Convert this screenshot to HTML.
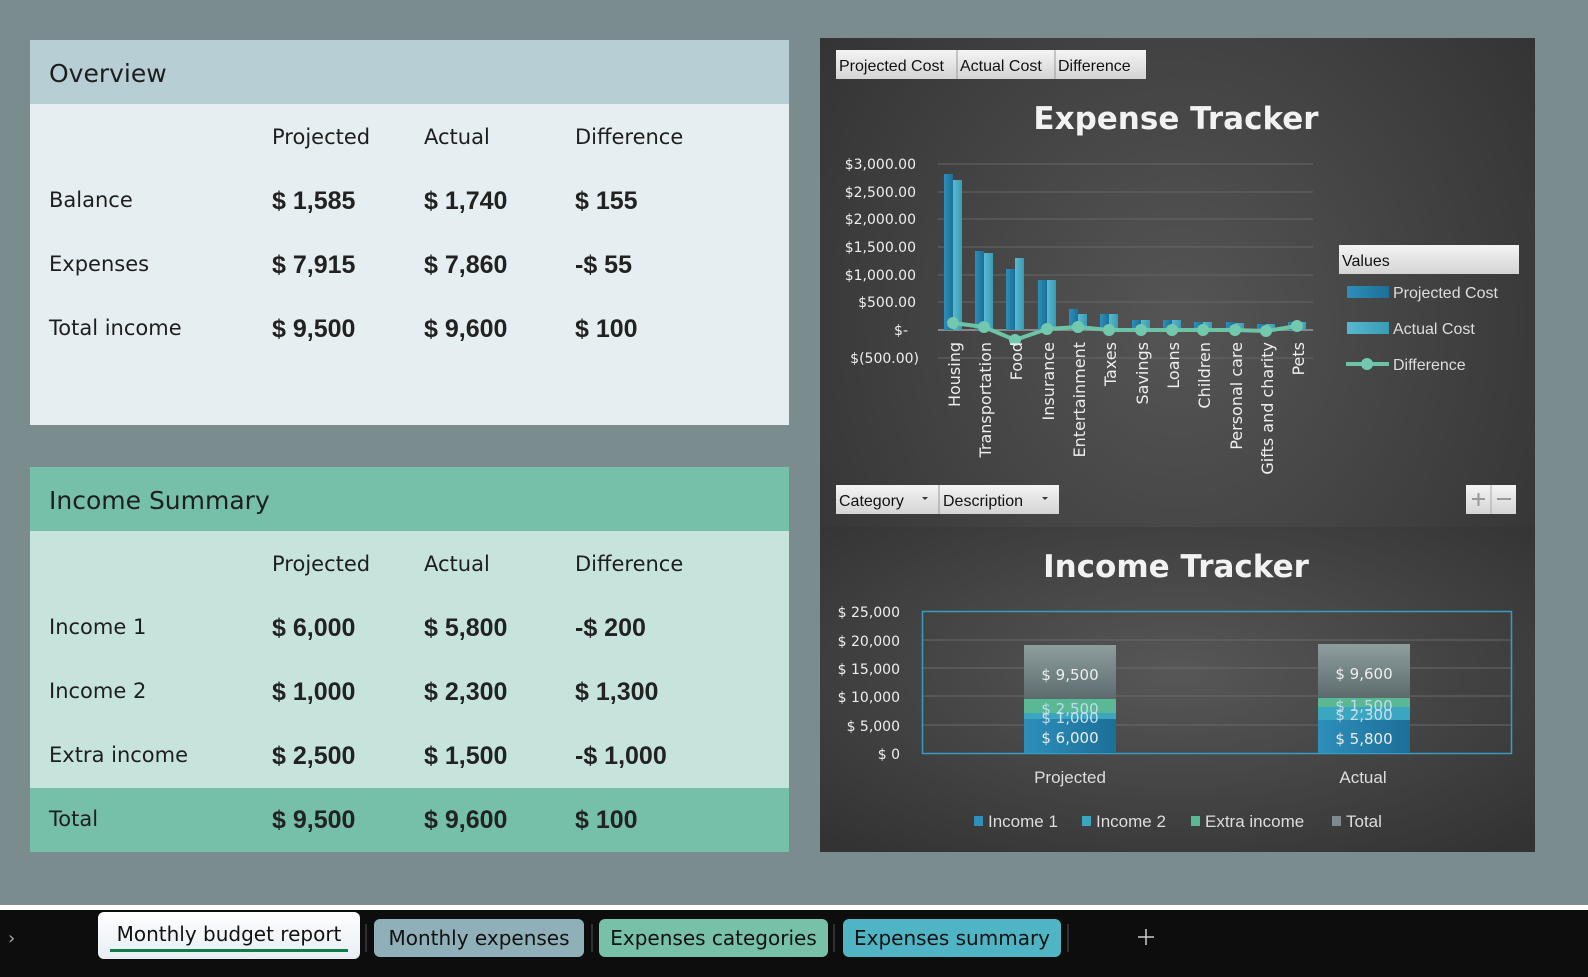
<!DOCTYPE html>
<html><head><meta charset="utf-8"><style>
*{margin:0;padding:0;box-sizing:border-box}
body{width:1588px;height:977px;background:#7b8c8e;position:relative;overflow:hidden;font-family:"Liberation Sans","DejaVu Sans",sans-serif;color:#1e1e1e}
.abs{position:absolute}
.t{position:absolute;font-size:22px;line-height:1;white-space:nowrap;font-family:"DejaVu Sans","Liberation Sans",sans-serif;font-size:21px}
.v{position:absolute;font-size:25px;font-weight:bold;line-height:1;white-space:nowrap;color:#222}
.tab{position:absolute;top:919px;height:38px;border-radius:6px;font-size:21px;line-height:38px;text-align:center;color:#111;font-family:"DejaVu Sans","Liberation Sans",sans-serif;font-size:20px}
</style></head><body>
<!-- Overview -->
<div class="abs" style="left:30px;top:40px;width:759px;height:64px;background:#b6ced4"></div>
<div class="abs" style="left:30px;top:104px;width:759px;height:321px;background:#e5eef0"></div>
<div class="t" style="left:49px;top:61px;font-size:25px">Overview</div>
<div class="t" style="left:272px;top:127px">Projected</div>
<div class="t" style="left:424px;top:127px">Actual</div>
<div class="t" style="left:575px;top:127px">Difference</div>
<div class="t" style="left:49px;top:190px">Balance</div>
<div class="t" style="left:49px;top:254px">Expenses</div>
<div class="t" style="left:49px;top:318px">Total income</div>
<div class="v" style="left:272px;top:189px">$ 1,585</div><div class="v" style="left:424px;top:189px">$ 1,740</div><div class="v" style="left:575px;top:189px">$ 155</div>
<div class="v" style="left:272px;top:253px">$ 7,915</div><div class="v" style="left:424px;top:253px">$ 7,860</div><div class="v" style="left:575px;top:253px">-$ 55</div>
<div class="v" style="left:272px;top:317px">$ 9,500</div><div class="v" style="left:424px;top:317px">$ 9,600</div><div class="v" style="left:575px;top:317px">$ 100</div>
<!-- Income summary -->
<div class="abs" style="left:30px;top:467px;width:759px;height:64px;background:#76bfa8"></div>
<div class="abs" style="left:30px;top:531px;width:759px;height:257px;background:#c7e4dc"></div>
<div class="abs" style="left:30px;top:788px;width:759px;height:64px;background:#76bfa8"></div>
<div class="t" style="left:49px;top:488px;font-size:25px">Income Summary</div>
<div class="t" style="left:272px;top:554px">Projected</div>
<div class="t" style="left:424px;top:554px">Actual</div>
<div class="t" style="left:575px;top:554px">Difference</div>
<div class="t" style="left:49px;top:617px">Income 1</div>
<div class="t" style="left:49px;top:681px">Income 2</div>
<div class="t" style="left:49px;top:745px">Extra income</div>
<div class="t" style="left:49px;top:809px">Total</div>
<div class="v" style="left:272px;top:616px">$ 6,000</div><div class="v" style="left:424px;top:616px">$ 5,800</div><div class="v" style="left:575px;top:616px">-$ 200</div>
<div class="v" style="left:272px;top:680px">$ 1,000</div><div class="v" style="left:424px;top:680px">$ 2,300</div><div class="v" style="left:575px;top:680px">$ 1,300</div>
<div class="v" style="left:272px;top:744px">$ 2,500</div><div class="v" style="left:424px;top:744px">$ 1,500</div><div class="v" style="left:575px;top:744px">-$ 1,000</div>
<div class="v" style="left:272px;top:808px">$ 9,500</div><div class="v" style="left:424px;top:808px">$ 9,600</div><div class="v" style="left:575px;top:808px">$ 100</div>

<!-- Charts panel -->
<svg class="abs" style="left:0;top:0" width="1588" height="977" font-family="DejaVu Sans, Liberation Sans, sans-serif">
<defs>
<radialGradient id="bg" cx="0.5" cy="0.35" r="0.7"><stop offset="0" stop-color="#555"/><stop offset="1" stop-color="#2f2f2f"/></radialGradient>
<radialGradient id="bg2" cx="0.5" cy="0.45" r="0.7"><stop offset="0" stop-color="#575757"/><stop offset="1" stop-color="#333"/></radialGradient>
<linearGradient id="btn" x1="0" y1="0" x2="0" y2="1"><stop offset="0" stop-color="#f4f4f4"/><stop offset="1" stop-color="#d4d4d4"/></linearGradient>
<linearGradient id="pc" x1="0" x2="1"><stop offset="0" stop-color="#2d8fba"/><stop offset="1" stop-color="#1c6f98"/></linearGradient>
<linearGradient id="ac" x1="0" x2="1"><stop offset="0" stop-color="#58b9cf"/><stop offset="1" stop-color="#3a9bb5"/></linearGradient>
<linearGradient id="tot" x1="0" y1="0" x2="0" y2="1"><stop offset="0" stop-color="#8e9d9e"/><stop offset="1" stop-color="#5c6b6d"/></linearGradient>
</defs>
<rect x="820" y="38" width="715" height="814" fill="url(#bg)"/>
<rect x="820" y="527" width="715" height="325" fill="url(#bg2)"/>
<!-- buttons -->
<rect x="836" y="50" width="310" height="29" fill="url(#btn)"/>
<line x1="957" y1="50" x2="957" y2="79" stroke="#999"/><line x1="1055" y1="50" x2="1055" y2="79" stroke="#999"/>
<g font-size="16" fill="#111" font-family="Liberation Sans, sans-serif"><text x="839" y="71">Projected Cost</text><text x="960" y="71">Actual Cost</text><text x="1058" y="71">Difference</text></g>
<text x="1176" y="129" text-anchor="middle" font-size="31" font-weight="bold" fill="#f2f2f2">Expense Tracker</text>
<!-- grid -->
<g stroke="#666" stroke-width="1">
<line x1="938" y1="164" x2="1313" y2="164"/><line x1="938" y1="192" x2="1313" y2="192"/><line x1="938" y1="219" x2="1313" y2="219"/><line x1="938" y1="247" x2="1313" y2="247"/><line x1="938" y1="275" x2="1313" y2="275"/><line x1="938" y1="302" x2="1313" y2="302"/><line x1="938" y1="358" x2="1313" y2="358"/>
</g>
<line x1="938" y1="330" x2="1313" y2="330" stroke="#888" stroke-width="2"/>
<g font-size="14" fill="#eee" text-anchor="end">
<text x="916" y="169">$3,000.00</text><text x="916" y="197">$2,500.00</text><text x="916" y="224">$2,000.00</text><text x="916" y="252">$1,500.00</text><text x="916" y="280">$1,000.00</text><text x="916" y="307">$500.00</text><text x="908" y="335">$-</text><text x="919" y="363">$(500.00)</text>
</g>
<g>
<rect x="944" y="174" width="9" height="156" fill="url(#pc)"/><rect x="953" y="180" width="9" height="150" fill="url(#ac)"/>
<rect x="975" y="251" width="9" height="79" fill="url(#pc)"/><rect x="984" y="253" width="9" height="77" fill="url(#ac)"/>
<rect x="1006" y="269" width="9" height="61" fill="url(#pc)"/><rect x="1015" y="258" width="9" height="72" fill="url(#ac)"/>
<rect x="1038" y="280" width="9" height="50" fill="url(#pc)"/><rect x="1047" y="280" width="9" height="50" fill="url(#ac)"/>
<rect x="1069" y="309" width="9" height="21" fill="url(#pc)"/><rect x="1078" y="314" width="9" height="16" fill="url(#ac)"/>
<rect x="1100" y="314" width="9" height="16" fill="url(#pc)"/><rect x="1109" y="314" width="9" height="16" fill="url(#ac)"/>
<rect x="1132" y="320" width="9" height="10" fill="url(#pc)"/><rect x="1141" y="320" width="9" height="10" fill="url(#ac)"/>
<rect x="1163" y="320" width="9" height="10" fill="url(#pc)"/><rect x="1172" y="320" width="9" height="10" fill="url(#ac)"/>
<rect x="1194" y="322" width="9" height="8" fill="url(#pc)"/><rect x="1203" y="322" width="9" height="8" fill="url(#ac)"/>
<rect x="1226" y="322" width="9" height="8" fill="url(#pc)"/><rect x="1235" y="323" width="9" height="7" fill="url(#ac)"/>
<rect x="1257" y="324" width="9" height="6" fill="url(#pc)"/><rect x="1266" y="324" width="9" height="6" fill="url(#ac)"/>
<rect x="1288" y="322" width="9" height="8" fill="url(#pc)"/><rect x="1297" y="322" width="9" height="8" fill="url(#ac)"/>
</g>
<polyline points="953,323 984,327 1015,340 1047,329 1078,327 1109,330 1141,330 1172,330 1203,330 1235,330 1266,331 1297,326" fill="none" stroke="#6cc3a6" stroke-width="4"/>
<g fill="#72c9ad"><circle cx="953" cy="323" r="6"/><circle cx="984" cy="327" r="6"/><circle cx="1015" cy="340" r="6"/><circle cx="1047" cy="329" r="6"/><circle cx="1078" cy="327" r="6"/><circle cx="1109" cy="330" r="6"/><circle cx="1141" cy="330" r="6"/><circle cx="1172" cy="330" r="6"/><circle cx="1203" cy="330" r="6"/><circle cx="1235" cy="330" r="6"/><circle cx="1266" cy="331" r="6"/><circle cx="1297" cy="326" r="6"/></g>
<g font-size="16" fill="#eee" text-anchor="end">
<text transform="translate(960,342) rotate(-90)">Housing</text>
<text transform="translate(991,342) rotate(-90)">Transportation</text>
<text transform="translate(1022,342) rotate(-90)">Food</text>
<text transform="translate(1054,342) rotate(-90)">Insurance</text>
<text transform="translate(1085,342) rotate(-90)">Entertainment</text>
<text transform="translate(1116,342) rotate(-90)">Taxes</text>
<text transform="translate(1148,342) rotate(-90)">Savings</text>
<text transform="translate(1179,342) rotate(-90)">Loans</text>
<text transform="translate(1210,342) rotate(-90)">Children</text>
<text transform="translate(1242,342) rotate(-90)">Personal care</text>
<text transform="translate(1273,342) rotate(-90)">Gifts and charity</text>
<text transform="translate(1304,342) rotate(-90)">Pets</text>
</g>
<!-- legend -->
<rect x="1339" y="245" width="180" height="29" fill="url(#btn)"/>
<text x="1342" y="266" font-size="16" fill="#111" font-family="Liberation Sans, sans-serif">Values</text>
<rect x="1347" y="286" width="42" height="12" fill="url(#pc)"/>
<rect x="1347" y="322" width="42" height="12" fill="url(#ac)"/>
<line x1="1346" y1="364" x2="1389" y2="364" stroke="#6cc3a6" stroke-width="4"/><circle cx="1367" cy="364" r="6" fill="#72c9ad"/>
<g font-size="16" fill="#ddd" font-family="Liberation Sans, sans-serif"><text x="1393" y="298">Projected Cost</text><text x="1393" y="334">Actual Cost</text><text x="1393" y="370">Difference</text></g>
<!-- slicer buttons -->
<rect x="836" y="485" width="223" height="29" fill="url(#btn)"/><line x1="939" y1="485" x2="939" y2="514" stroke="#999"/>
<g font-size="16" fill="#111" font-family="Liberation Sans, sans-serif"><text x="839" y="506">Category</text><text x="943" y="506">Description</text></g>
<g fill="#333"><path d="M922 497h6l-3 3z"/><path d="M1042 497h6l-3 3z"/></g>
<rect x="1466" y="485" width="50" height="29" fill="url(#btn)"/><line x1="1491" y1="485" x2="1491" y2="514" stroke="#aaa"/>
<g stroke="#999" stroke-width="2"><line x1="1472" y1="499" x2="1485" y2="499"/><line x1="1478.5" y1="493" x2="1478.5" y2="506"/><line x1="1497" y1="499" x2="1511" y2="499"/></g>
<!-- income tracker -->
<text x="1176" y="577" text-anchor="middle" font-size="31" font-weight="bold" fill="#f2f2f2">Income Tracker</text>
<g stroke="#6a6a6a"><line x1="922" y1="640" x2="1511" y2="640"/><line x1="922" y1="668" x2="1511" y2="668"/><line x1="922" y1="696" x2="1511" y2="696"/><line x1="922" y1="725" x2="1511" y2="725"/></g>
<rect x="922.5" y="611.5" width="589" height="142" fill="none" stroke="#3a9bc0" stroke-width="1.5"/>
<g font-size="14" fill="#eee" text-anchor="end"><text x="900" y="617">$ 25,000</text><text x="900" y="646">$ 20,000</text><text x="900" y="674">$ 15,000</text><text x="900" y="702">$ 10,000</text><text x="900" y="731">$ 5,000</text><text x="900" y="759">$ 0</text></g>
<rect x="1024" y="719" width="92" height="34" fill="url(#pc)"/><rect x="1024" y="713" width="92" height="6" fill="#3aa6bf"/><rect x="1024" y="699" width="92" height="14" fill="#5bb894"/><rect x="1024" y="645" width="92" height="54" fill="url(#tot)"/>
<rect x="1318" y="720" width="92" height="33" fill="url(#pc)"/><rect x="1318" y="707" width="92" height="13" fill="#3aa6bf"/><rect x="1318" y="698" width="92" height="9" fill="#5bb894"/><rect x="1318" y="644" width="92" height="54" fill="url(#tot)"/>
<g font-size="15" fill="#eee" text-anchor="middle"><text x="1070" y="680">$ 9,500</text><text x="1070" y="714" fill="#bde">$ 2,500</text><text x="1070" y="723" fill="#cde">$ 1,000</text><text x="1070" y="743">$ 6,000</text>
<text x="1364" y="679">$ 9,600</text><text x="1364" y="711" fill="#bde">$ 1,500</text><text x="1364" y="720" fill="#cde">$ 2,300</text><text x="1364" y="744">$ 5,800</text></g>
<g font-size="17" fill="#ddd" text-anchor="middle" font-family="Liberation Sans, sans-serif"><text x="1070" y="783">Projected</text><text x="1363" y="783">Actual</text></g>
<rect x="974" y="816" width="9" height="10" fill="#2d8fba"/><rect x="1082" y="816" width="9" height="10" fill="#3aa6bf"/><rect x="1191" y="816" width="9" height="10" fill="#5bb894"/><rect x="1332" y="816" width="9" height="10" fill="#7c8a8b"/>
<g font-size="17" fill="#ddd" font-family="Liberation Sans, sans-serif"><text x="988" y="827">Income 1</text><text x="1096" y="827">Income 2</text><text x="1205" y="827">Extra income</text><text x="1346" y="827">Total</text></g>
<!-- bottom bar -->
<rect x="0" y="905" width="1588" height="5" fill="#fff"/>
<rect x="0" y="910" width="1588" height="67" fill="#0d0d0d"/>
<text x="8" y="944" font-size="18" fill="#aaa">›</text>
<line x1="1138" y1="937" x2="1154" y2="937" stroke="#ccc" stroke-width="1.5"/><line x1="1146" y1="929" x2="1146" y2="945" stroke="#ccc" stroke-width="1.5"/>
<g stroke="#555"><line x1="366" y1="924" x2="366" y2="952"/><line x1="592" y1="924" x2="592" y2="952"/><line x1="834" y1="924" x2="834" y2="952"/><line x1="1068" y1="924" x2="1068" y2="952"/></g>
</svg>
<div class="tab" style="left:98px;top:912px;width:262px;height:47px;background:linear-gradient(#fff,#e6eef4);line-height:44px">Monthly budget report<div style="position:absolute;left:12px;right:12px;top:37px;height:3px;background:#137a4a"></div></div>
<div class="tab" style="left:374px;width:210px;background:#8fb0b8">Monthly expenses</div>
<div class="tab" style="left:599px;width:229px;background:#77c1a8">Expenses categories</div>
<div class="tab" style="left:843px;width:218px;background:#4fb4c4">Expenses summary</div>
</body></html>
